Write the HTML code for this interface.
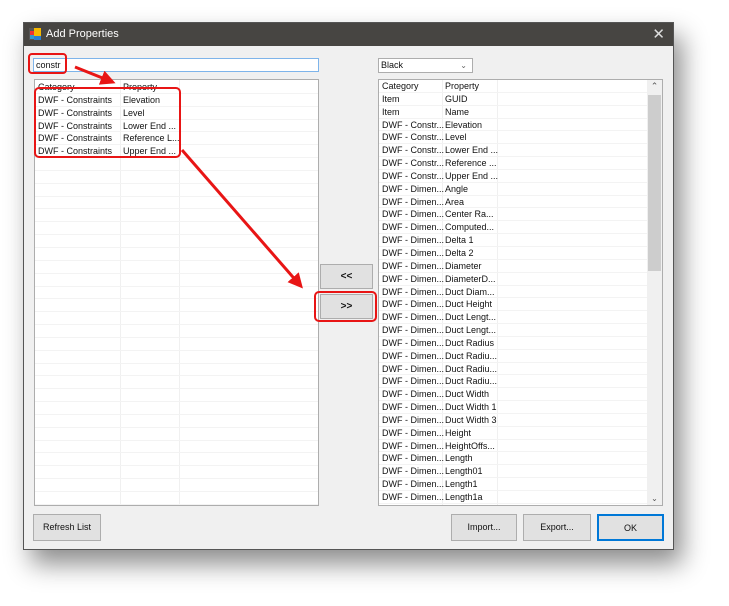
<!DOCTYPE html>
<html><head><meta charset="utf-8"><style>
*{margin:0;padding:0;box-sizing:border-box}
body{width:729px;height:606px;background:#fff;position:relative;overflow:hidden;font-family:"Liberation Sans",sans-serif;font-size:9px;color:#111}
.win{position:absolute;left:23px;top:22px;width:651px;height:528px;background:#f0f0f0;border:1px solid #555;box-shadow:8px 14px 24px rgba(0,0,0,.45)}
.title{position:absolute;left:0;top:0;width:100%;height:23px;background:#474542;color:#fff;font-size:11px;line-height:23px;padding-left:22px}
.ico{position:absolute;left:5px;top:5px;width:12px;height:12px}
.x{position:absolute;right:8px;top:0;font-size:15px;color:#ddd}
.abs{position:absolute}
.tb{position:absolute;background:#fff;border:1px solid #7eb4ea;padding:1px 2px;font-size:9px}
.list{position:absolute;background:#fff;border:1px solid #adadad;overflow:hidden}
.row{height:12.85px;line-height:12.85px;border-bottom:1px solid #f3f3f3;position:relative;white-space:nowrap}
.row span{position:absolute;top:0;padding-left:3px}
.vl{position:absolute;top:0;bottom:0;width:1px;background:#f0f0f0}
.btn{position:absolute;background:#e1e1e1;border:1px solid #adadad;text-align:center;font-size:9px}
.sb{position:absolute;right:0;top:0;width:15px;height:100%;background:#f0f0f0;z-index:5}
</style></head><body>
<div class="win">
 <div class="title"><svg class="ico" viewBox="0 0 12 12"><rect x="0" y="0" width="5" height="12" fill="#555"/><rect x="1" y="3" width="4" height="4" fill="#e33"/><rect x="1" y="7" width="4" height="4" fill="#39c"/><rect x="5" y="0" width="7" height="8" fill="#f5b800"/><rect x="5" y="8" width="7" height="4" fill="#2a7fd0"/></svg>Add Properties<span class="x">✕</span></div>
</div>
<div class="tb" style="left:33px;top:58px;width:286px;height:14px;line-height:10px">constr</div>
<div class="list" style="left:34px;top:79px;width:285px;height:427px">
 <div class="vl" style="left:85px"></div><div class="vl" style="left:144px"></div>
 <div class="row" style="margin-top:1px"><span style="left:0">Category</span><span style="left:85px">Property</span></div>
 <div class="row"><span>DWF - Constraints</span><span style="left:85px">Elevation</span></div>
 <div class="row"><span>DWF - Constraints</span><span style="left:85px">Level</span></div>
 <div class="row"><span>DWF - Constraints</span><span style="left:85px">Lower End ...</span></div>
 <div class="row"><span>DWF - Constraints</span><span style="left:85px">Reference L...</span></div>
 <div class="row"><span>DWF - Constraints</span><span style="left:85px">Upper End ...</span></div>
 <div class="row"></div><div class="row"></div><div class="row"></div><div class="row"></div><div class="row"></div><div class="row"></div><div class="row"></div><div class="row"></div><div class="row"></div><div class="row"></div><div class="row"></div><div class="row"></div><div class="row"></div><div class="row"></div><div class="row"></div><div class="row"></div><div class="row"></div><div class="row"></div><div class="row"></div><div class="row"></div><div class="row"></div><div class="row"></div><div class="row"></div><div class="row"></div><div class="row"></div><div class="row"></div><div class="row"></div><div class="row"></div>
</div>
<div class="tb" style="left:378px;top:58px;width:95px;height:15px;border-color:#adadad;line-height:11px">Black<span style="position:absolute;right:5px;top:1px;color:#666;font-size:8px">⌄</span></div>
<div class="list" style="left:378px;top:79px;width:285px;height:427px">
 <div class="vl" style="left:63px"></div><div class="vl" style="left:118px"></div>
 <div class="sb"><div style="position:absolute;left:1px;top:15px;width:13px;height:176px;background:#cdcdcd"></div><div style="position:absolute;top:1px;width:15px;text-align:center;color:#555;font-size:9px">⌃</div><div style="position:absolute;bottom:2px;width:15px;text-align:center;color:#555;font-size:8px">⌄</div></div>
 <div class="row"><span>Category</span><span style="left:63px">Property</span></div>
 <div class="row"><span>Item</span><span style="left:63px">GUID</span></div>
 <div class="row"><span>Item</span><span style="left:63px">Name</span></div>
 <div class="row"><span>DWF - Constr...</span><span style="left:63px">Elevation</span></div>
 <div class="row"><span>DWF - Constr...</span><span style="left:63px">Level</span></div>
 <div class="row"><span>DWF - Constr...</span><span style="left:63px">Lower End ...</span></div>
 <div class="row"><span>DWF - Constr...</span><span style="left:63px">Reference ...</span></div>
 <div class="row"><span>DWF - Constr...</span><span style="left:63px">Upper End ...</span></div>
 <div class="row"><span>DWF - Dimen...</span><span style="left:63px">Angle</span></div>
 <div class="row"><span>DWF - Dimen...</span><span style="left:63px">Area</span></div>
 <div class="row"><span>DWF - Dimen...</span><span style="left:63px">Center Ra...</span></div>
 <div class="row"><span>DWF - Dimen...</span><span style="left:63px">Computed...</span></div>
 <div class="row"><span>DWF - Dimen...</span><span style="left:63px">Delta 1</span></div>
 <div class="row"><span>DWF - Dimen...</span><span style="left:63px">Delta 2</span></div>
 <div class="row"><span>DWF - Dimen...</span><span style="left:63px">Diameter</span></div>
 <div class="row"><span>DWF - Dimen...</span><span style="left:63px">DiameterD...</span></div>
 <div class="row"><span>DWF - Dimen...</span><span style="left:63px">Duct Diam...</span></div>
 <div class="row"><span>DWF - Dimen...</span><span style="left:63px">Duct Height</span></div>
 <div class="row"><span>DWF - Dimen...</span><span style="left:63px">Duct Lengt...</span></div>
 <div class="row"><span>DWF - Dimen...</span><span style="left:63px">Duct Lengt...</span></div>
 <div class="row"><span>DWF - Dimen...</span><span style="left:63px">Duct Radius</span></div>
 <div class="row"><span>DWF - Dimen...</span><span style="left:63px">Duct Radiu...</span></div>
 <div class="row"><span>DWF - Dimen...</span><span style="left:63px">Duct Radiu...</span></div>
 <div class="row"><span>DWF - Dimen...</span><span style="left:63px">Duct Radiu...</span></div>
 <div class="row"><span>DWF - Dimen...</span><span style="left:63px">Duct Width</span></div>
 <div class="row"><span>DWF - Dimen...</span><span style="left:63px">Duct Width 1</span></div>
 <div class="row"><span>DWF - Dimen...</span><span style="left:63px">Duct Width 3</span></div>
 <div class="row"><span>DWF - Dimen...</span><span style="left:63px">Height</span></div>
 <div class="row"><span>DWF - Dimen...</span><span style="left:63px">HeightOffs...</span></div>
 <div class="row"><span>DWF - Dimen...</span><span style="left:63px">Length</span></div>
 <div class="row"><span>DWF - Dimen...</span><span style="left:63px">Length01</span></div>
 <div class="row"><span>DWF - Dimen...</span><span style="left:63px">Length1</span></div>
 <div class="row"><span>DWF - Dimen...</span><span style="left:63px">Length1a</span></div>
 <div class="row"><span>DWF - Dimen...</span><span style="left:63px">Length1b</span></div>
</div>
<div class="btn" style="left:320px;top:264px;width:53px;height:25px;line-height:23px;font-size:10px;font-weight:bold">&lt;&lt;</div>
<div class="btn" style="left:320px;top:294px;width:53px;height:25px;line-height:23px;font-size:10px;font-weight:bold">&gt;&gt;</div>
<div class="btn" style="left:33px;top:514px;width:68px;height:27px;line-height:25px">Refresh List</div>
<div class="btn" style="left:451px;top:514px;width:66px;height:27px;line-height:25px">Import...</div>
<div class="btn" style="left:523px;top:514px;width:68px;height:27px;line-height:25px">Export...</div>
<div class="btn" style="left:597px;top:514px;width:67px;height:27px;line-height:25px;border:2px solid #0078d7">OK</div>
<svg class="abs" style="left:0;top:0" width="729" height="606">
 <defs><marker id="ah" markerWidth="5" markerHeight="5" refX="3" refY="2.5" orient="auto"><path d="M0,0 L5,2.5 L0,5 z" fill="#e81515"/></marker></defs>
 <rect x="29" y="54" width="37" height="19" rx="3" fill="none" stroke="#e81515" stroke-width="2"/>
 <rect x="35" y="88" width="145" height="69" rx="4" fill="none" stroke="#e81515" stroke-width="2"/>
 <rect x="315" y="292" width="61" height="29" rx="4" fill="none" stroke="#e81515" stroke-width="2"/>
 <line x1="75" y1="67" x2="110" y2="81" stroke="#e81515" stroke-width="3" marker-end="url(#ah)"/>
 <line x1="182" y1="150" x2="299" y2="284" stroke="#e81515" stroke-width="3" marker-end="url(#ah)"/>
</svg>
</body></html>
